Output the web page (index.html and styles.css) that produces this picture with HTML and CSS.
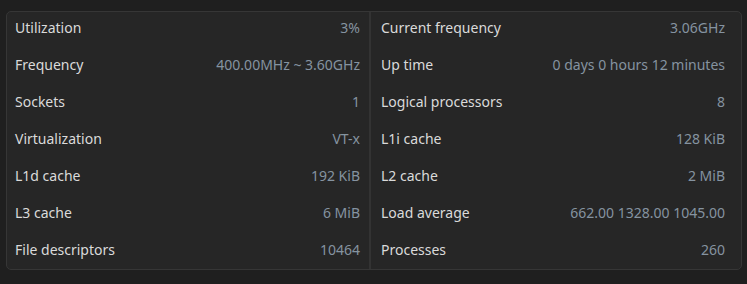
FILE: index.html
```html
<!DOCTYPE html>
<html lang="en">
<head>
    <meta charset="utf-8">
    <meta name="viewport" content="width=device-width, initial-scale=1.0">
    <title>CPU</title>
    <link rel="stylesheet" href="styles.css">
</head>
<body>
    <div class="cpu-info">
        <div class="info-column left">
            <div class="info-row"><span class="label">Utilization</span><span class="value">3%</span></div>
            <div class="info-row"><span class="label">Frequency</span><span class="value">400.00MHz ~ 3.60GHz</span></div>
            <div class="info-row"><span class="label">Sockets</span><span class="value">1</span></div>
            <div class="info-row"><span class="label">Virtualization</span><span class="value">VT-x</span></div>
            <div class="info-row"><span class="label">L1d cache</span><span class="value">192 KiB</span></div>
            <div class="info-row"><span class="label">L3 cache</span><span class="value">6 MiB</span></div>
            <div class="info-row"><span class="label">File descriptors</span><span class="value">10464</span></div>
        </div>
        <div class="info-column right">
            <div class="info-row"><span class="label">Current frequency</span><span class="value">3.06GHz</span></div>
            <div class="info-row"><span class="label">Up time</span><span class="value">0 days 0 hours 12 minutes</span></div>
            <div class="info-row"><span class="label">Logical processors</span><span class="value">8</span></div>
            <div class="info-row"><span class="label">L1i cache</span><span class="value">128 KiB</span></div>
            <div class="info-row"><span class="label">L2 cache</span><span class="value">2 MiB</span></div>
            <div class="info-row"><span class="label">Load average</span><span class="value">662.00 1328.00 1045.00</span></div>
            <div class="info-row"><span class="label">Processes</span><span class="value">260</span></div>
        </div>
    </div>
</body>
</html>
```

FILE: styles.css
```css
body {
    font-family: "Noto Sans", sans-serif;
    font-size: 14px;
    margin: 0;
    padding: 11px 5px 0 6px;
    background-color: #1f1f1f;
}

.cpu-info {
    display: grid;
    grid-template-columns: 364px 1fr;
    background-color: #262626;
    border: 1px solid #363636;
    border-radius: 5px;
}

.info-column.left {
    border-right: 2px solid #333333;
    padding: 0 9px 0 8px;
}

.info-column.right {
    padding: 0 16px 0 10px;
}

.info-row {
    display: flex;
    justify-content: space-between;
    align-items: center;
    box-sizing: border-box;
    height: 37px;
    padding-bottom: 6px;
}

.info-row:last-child {
    height: 35px;
    padding-bottom: 4px;
}

.label {
    color: #dadada;
}

.value {
    color: #8593a0;
}
```
